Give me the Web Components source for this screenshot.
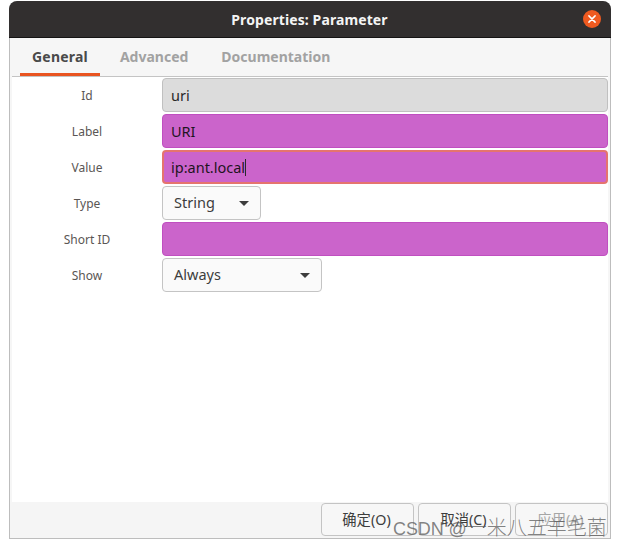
<!DOCTYPE html>
<html>
<head>
<meta charset="utf-8">
<style>
  html,body{margin:0;padding:0;background:#fff}
  body{font-family:"Noto Sans","Noto Sans CJK SC",sans-serif}
</style>
</head>
<body>
<prop-dialog title-text="Properties: Parameter">
  <prop-tabs slot="tabs"></prop-tabs>
  <prop-row label="Id"><prop-entry value="uri" kind="locked"></prop-entry></prop-row>
  <prop-row label="Label"><prop-entry value="URI"></prop-entry></prop-row>
  <prop-row label="Value"><prop-entry value="ip:ant.local" kind="focus"></prop-entry></prop-row>
  <prop-row label="Type"><prop-combo value="String" width="99"></prop-combo></prop-row>
  <prop-row label="Short ID"><prop-entry value=""></prop-entry></prop-row>
  <prop-row label="Show"><prop-combo value="Always" width="160"></prop-combo></prop-row>
  <prop-button slot="foot">确定(O)</prop-button>
  <prop-button slot="foot">取消(C)</prop-button>
  <prop-button slot="foot" disabled>应用(A)</prop-button>
</prop-dialog>
<script>
const FONT = `"Noto Sans","Noto Sans CJK SC",sans-serif`;

class PropDialog extends HTMLElement {
  connectedCallback() {
    if (this.shadowRoot) return;
    this.attachShadow({ mode: "open" });
    const title = this.getAttribute("title-text") || "";
    this.shadowRoot.innerHTML = `
      <style>
        :host{display:block;position:relative;width:620px;height:548px;font-family:${FONT};overflow:hidden}
        .win{box-sizing:border-box;width:602px;height:538px;margin:1px 0 0 9px;display:flex;flex-direction:column;
          border:solid #bdbdbd;border-width:0 1px 1px 1px;border-radius:9px 9px 0 0;background:#f6f6f6}
        .bar{flex:none;height:37px;background:#322f2f;border-radius:8px 8px 0 0;display:flex;align-items:center;justify-content:center;position:relative;
          border-bottom:1px solid #151414;box-sizing:border-box;margin:0 -1px}
        .bar b{color:#f4f4f4;font-size:14px;font-weight:700;letter-spacing:.1px;position:relative;left:-.5px}
        .x{position:absolute;right:10px;top:9px;width:18px;height:18px}
        .main{flex:1;display:flex;flex-direction:column;min-height:0;padding:0 2px}
        .rows{flex:1;display:flex;flex-direction:column;gap:2px;padding-top:1px;background:#fff}
        .foot{flex:none;height:36px;background:#f5f5f5;display:flex;justify-content:flex-end;gap:4px;padding:1px 2px 0 0;box-sizing:border-box}
        .mark{position:absolute;left:393px;top:514px;font-size:18px;line-height:26px;color:rgba(85,85,85,.72);white-space:nowrap;
          font-family:"Liberation Sans","Noto Sans CJK SC",sans-serif;letter-spacing:-.1px}
        .mark span{font-size:20px;font-family:"Noto Sans CJK SC",sans-serif;font-weight:300;letter-spacing:0}
      </style>
      <div class="win">
        <div class="bar"><b>${title}</b>
          <svg class="x" viewBox="0 0 18 18"><circle cx="9" cy="9" r="9" fill="#ef5a20"/><path d="M5.9 5.9l6.2 6.2M12.1 5.9l-6.2 6.2" stroke="#fff" stroke-width="1.5" stroke-linecap="round"/></svg>
        </div>
        <div class="main">
          <slot name="tabs"></slot>
          <div class="rows"><slot></slot></div>
        </div>
        <div class="foot"><slot name="foot"></slot></div>
      </div>
      <div class="mark">CSDN @<span>一米八五羊毛菌</span></div>`;
  }
}

class PropTabs extends HTMLElement {
  connectedCallback() {
    if (this.shadowRoot) return;
    this.attachShadow({ mode: "open" });
    this.shadowRoot.innerHTML = `
      <style>
        :host{display:block}
        .tabs{display:flex;height:39px;box-sizing:border-box;border-bottom:1px solid #c4c4c4;padding-left:8px}
        .t{box-sizing:content-box;height:35px;line-height:38px;font-size:14px;font-weight:700;color:#a2a2a2;padding:0 12px;margin-right:9px}
        .t.on{color:#4a4a4a;border-bottom:3px solid #e95420;letter-spacing:.2px;margin-right:8px}
      </style>
      <div class="tabs">
        <div class="t on">General</div><div class="t">Advanced</div><div class="t">Documentation</div>
      </div>`;
  }
}

class PropRow extends HTMLElement {
  connectedCallback() {
    if (this.shadowRoot) return;
    this.attachShadow({ mode: "open" });
    this.shadowRoot.innerHTML = `
      <style>
        :host{display:block}
        .r{display:grid;grid-template-columns:150px 1fr;height:34px;align-items:center}
        label{text-align:center;font-size:12px;color:#5a5654}
      </style>
      <div class="r"><label>${this.getAttribute("label")}</label><div><slot></slot></div></div>`;
  }
}

class PropEntry extends HTMLElement {
  connectedCallback() {
    if (this.shadowRoot) return;
    this.attachShadow({ mode: "open" });
    const kind = this.getAttribute("kind") || "";
    this.shadowRoot.innerHTML = `
      <style>
        :host{display:block}
        .e{box-sizing:border-box;height:34px;border:1px solid #c04fc0;border-radius:4px;background:#cb64cb;
          padding:0 8px;line-height:32px;font-size:14.5px;color:#1f141f;white-space:nowrap}
        .locked{background:#dcdcdc;border-color:#c0c0c0;color:#2a2a2a}
        .focus{border:2px solid #e5746e;padding:0 7px;line-height:30px}
        i{display:inline-block;width:1px;height:17px;background:#2a2a2a;vertical-align:-3px}
      </style>
      <div class="e ${kind}">${this.getAttribute("value") || ""}${kind === "focus" ? "<i></i>" : ""}</div>`;
  }
}

class PropCombo extends HTMLElement {
  connectedCallback() {
    if (this.shadowRoot) return;
    this.attachShadow({ mode: "open" });
    this.shadowRoot.innerHTML = `
      <style>
        :host{display:block}
        .c{box-sizing:border-box;width:${this.getAttribute("width")}px;height:34px;border:1px solid #c4c4c4;border-radius:4px;background:#fafafa;
          display:flex;align-items:center;justify-content:space-between;padding:0 11px;font-size:14.5px;color:#3d3d3d}
        .c span:first-child{position:relative;top:-1px}
        .a{width:0;height:0;border:solid transparent;border-width:5px 5.5px 0;border-top-color:#3d3d3d}
      </style>
      <div class="c"><span>${this.getAttribute("value")}</span><span class="a"></span></div>`;
  }
}

class PropButton extends HTMLElement {
  connectedCallback() {
    if (this.shadowRoot) return;
    this.attachShadow({ mode: "open" });
    const off = this.hasAttribute("disabled");
    this.shadowRoot.innerHTML = `
      <style>
        :host{display:block}
        button{box-sizing:border-box;width:93px;height:33px;border:1px solid #c4c4c4;border-radius:4px;background:#f7f7f7;padding:0 2px 2px 0;
          font:14.3px ${FONT};color:${off ? "#a6a6a6" : "#3d3d3d"}}
      </style>
      <button><slot></slot></button>`;
  }
}

customElements.define("prop-dialog", PropDialog);
customElements.define("prop-tabs", PropTabs);
customElements.define("prop-row", PropRow);
customElements.define("prop-entry", PropEntry);
customElements.define("prop-combo", PropCombo);
customElements.define("prop-button", PropButton);
</script>
</body>
</html>
